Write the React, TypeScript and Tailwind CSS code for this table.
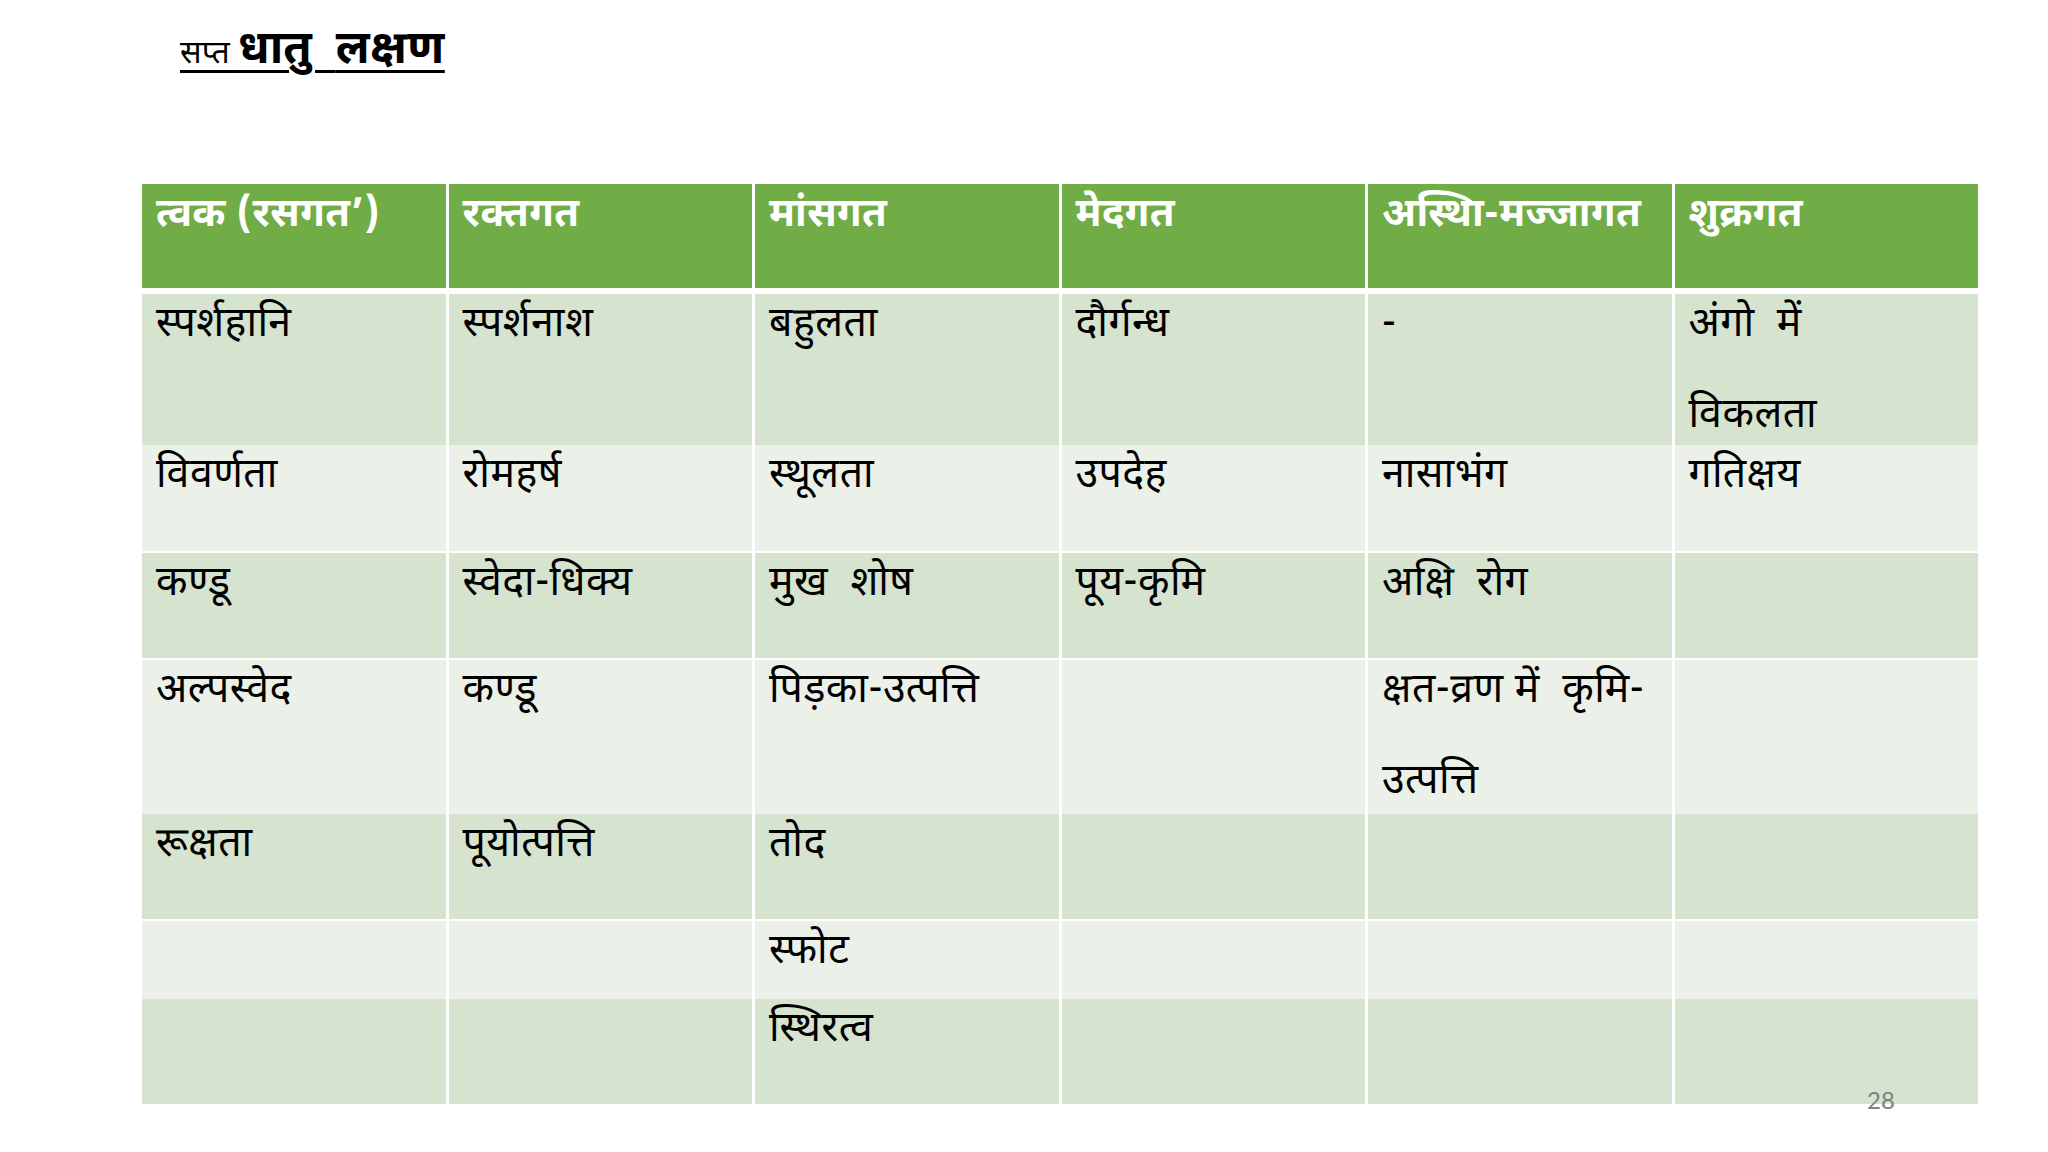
const devFont = {
  fontFamily: '"Noto Sans Devanagari", "Noto Sans", "Lohit Devanagari", sans-serif',
};

const headers = ["त्वक (रसगत’)", "रक्तगत", "मांसगत", "मेदगत", "अस्थिा-मज्जागत", "शुक्रगत"];

// each row: height in px, background, cells
const rows: { h: string; bg: string; cells: string[][] }[] = [
  {
    h: "h-[149px]",
    bg: "bg-[#d5e3cf]",
    cells: [["स्पर्शहानि"], ["स्पर्शनाश"], ["बहुलता"], ["दौर्गन्ध"], ["-"], ["अंगो  में", "विकलता"]],
  },
  {
    h: "h-[106px]",
    bg: "bg-[#ebf1e9]",
    cells: [["विवर्णता"], ["रोमहर्ष"], ["स्थूलता"], ["उपदेह"], ["नासाभंग"], ["गतिक्षय"]],
  },
  {
    h: "h-[105px]",
    bg: "bg-[#d5e3cf]",
    cells: [["कण्डू"], ["स्वेदा-धिक्य"], ["मुख  शोष"], ["पूय-कृमि"], ["अक्षि  रोग"], []],
  },
  {
    h: "h-[152px]",
    bg: "bg-[#ebf1e9]",
    cells: [["अल्पस्वेद"], ["कण्डू"], ["पिड़का-उत्पत्ति"], [], ["क्षत-व्रण में  कृमि-", "उत्पत्ति"], []],
  },
  {
    h: "h-[105px]",
    bg: "bg-[#d5e3cf]",
    cells: [["रूक्षता"], ["पूयोत्पत्ति"], ["तोद"], [], [], []],
  },
  {
    h: "h-[76px]",
    bg: "bg-[#ebf1e9]",
    cells: [[], [], ["स्फोट"], [], [], []],
  },
  {
    h: "h-[105px]",
    bg: "bg-[#d5e3cf]",
    cells: [[], [], ["स्थिरत्व"], [], [], []],
  },
];

export default function App() {
  return (
    <div className="relative w-[2048px] h-[1152px] overflow-hidden bg-white" style={devFont}>
      {/* title */}
      <div className="h-[184px] pl-[180px] pt-[29px]">
        <h1 className="whitespace-pre font-bold leading-[46px] text-black underline decoration-[3px] underline-offset-[7px]">
          <span className="text-[32px] font-normal">सप्त </span>
          <span className="text-[46px]">धातु  </span>
          <span className="text-[46px] tracking-[0.5px]">लक्षण</span>
        </h1>
      </div>

      {/* table */}
      <div className="ml-[142px] flex w-[1836px] flex-col">
        <div className="grid h-[104px] grid-cols-6 gap-x-[3px]">
          {headers.map((t) => (
            <div key={t} className="bg-[#70ad47] pl-[14px]">
              <div className="-mt-[13px] whitespace-pre text-[40px] font-bold leading-[91px] tracking-[0.3px] text-white">
                {t}
              </div>
            </div>
          ))}
        </div>

        <div className="mt-[6px] flex flex-col gap-y-[2px]">
          {rows.map((row, i) => (
            <div key={i} className={`grid grid-cols-6 gap-x-[3px] ${row.h}`}>
              {row.cells.map((lines, j) => (
                <div key={j} className={`${row.bg} overflow-visible pl-[14px]`}>
                  <div className="-mt-[13px] whitespace-pre text-[41px] leading-[91px] tracking-[0.5px] text-black">
                    {lines.map((l, k) => (
                      <div key={k}>{l}</div>
                    ))}
                  </div>
                </div>
              ))}
            </div>
          ))}
        </div>
      </div>

      {/* slide number */}
      <div
        className="absolute left-[1867px] top-[1086px] text-[24px] leading-[28px] text-[#7f7f7f]"
        style={{ fontFamily: "Lato, 'Open Sans', sans-serif" }}
      >
        28
      </div>
    </div>
  );
}
